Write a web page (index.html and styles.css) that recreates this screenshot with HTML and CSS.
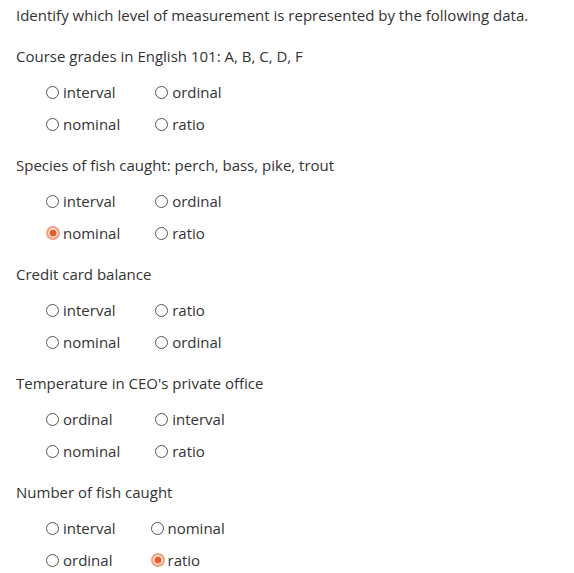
FILE: index.html
```html
<!DOCTYPE html>
<html>
<head>
<meta charset="utf-8">
<link rel="stylesheet" href="styles.css">
</head>
<body>
<div class="page">
  <p class="intro">Identify which level of measurement is represented by the following data.</p>

  <div class="question">
    <p class="prompt">Course grades in English 101: A, B, C, D, F</p>
    <div class="options">
      <label class="opt"><span class="radio"></span>interval</label>
      <label class="opt"><span class="radio"></span>ordinal</label>
      <label class="opt"><span class="radio"></span>nominal</label>
      <label class="opt"><span class="radio"></span>ratio</label>
    </div>
  </div>

  <div class="question">
    <p class="prompt">Species of fish caught: perch, bass, pike, trout</p>
    <div class="options">
      <label class="opt"><span class="radio"></span>interval</label>
      <label class="opt"><span class="radio"></span>ordinal</label>
      <label class="opt"><span class="radio checked"></span>nominal</label>
      <label class="opt"><span class="radio"></span>ratio</label>
    </div>
  </div>

  <div class="question">
    <p class="prompt">Credit card balance</p>
    <div class="options">
      <label class="opt"><span class="radio"></span>interval</label>
      <label class="opt"><span class="radio"></span>ratio</label>
      <label class="opt"><span class="radio"></span>nominal</label>
      <label class="opt"><span class="radio"></span>ordinal</label>
    </div>
  </div>

  <div class="question">
    <p class="prompt">Temperature in CEO's private office</p>
    <div class="options">
      <label class="opt"><span class="radio"></span>ordinal</label>
      <label class="opt"><span class="radio"></span>interval</label>
      <label class="opt"><span class="radio"></span>nominal</label>
      <label class="opt"><span class="radio"></span>ratio</label>
    </div>
  </div>

  <div class="question">
    <p class="prompt">Number of fish caught</p>
    <div class="options">
      <label class="opt"><span class="radio"></span>interval</label>
      <label class="opt"><span class="radio"></span>nominal</label>
      <label class="opt"><span class="radio"></span>ordinal</label>
      <label class="opt"><span class="radio checked"></span>ratio</label>
    </div>
  </div>
</div>
</body>
</html>
```

FILE: styles.css
```css
html, body {
  margin: 0;
  padding: 0;
  background: #ffffff;
}

body {
  font-family: "Open Sans", "Liberation Sans", sans-serif;
  font-size: 15px;
  line-height: 20px;
  color: #333333;
}

.page {
  padding: 5px 16px 0 16px;
}

.intro {
  margin: 0 0 21px 0;
}

.question {
  margin-bottom: 15px;
}

.prompt {
  margin: 0 0 10px 0;
}

.options {
  display: grid;
  grid-template-columns: auto auto;
  justify-content: start;
  column-gap: 35px;
  padding-left: 30px;
}

.opt {
  display: flex;
  align-items: center;
  height: 32px;
  white-space: nowrap;
}

.radio {
  box-sizing: border-box;
  width: 13px;
  height: 13px;
  border: 1px solid #555555;
  border-radius: 50%;
  margin-right: 4px;
  flex: none;
  background: #ffffff;
}

.radio.checked {
  width: 14px;
  height: 14px;
  margin-right: 3px;
  border: 2px solid #f7a27f;
  background: #f05a28;
  box-shadow: inset 0 0 0 1.5px #ffffff;
}
```
